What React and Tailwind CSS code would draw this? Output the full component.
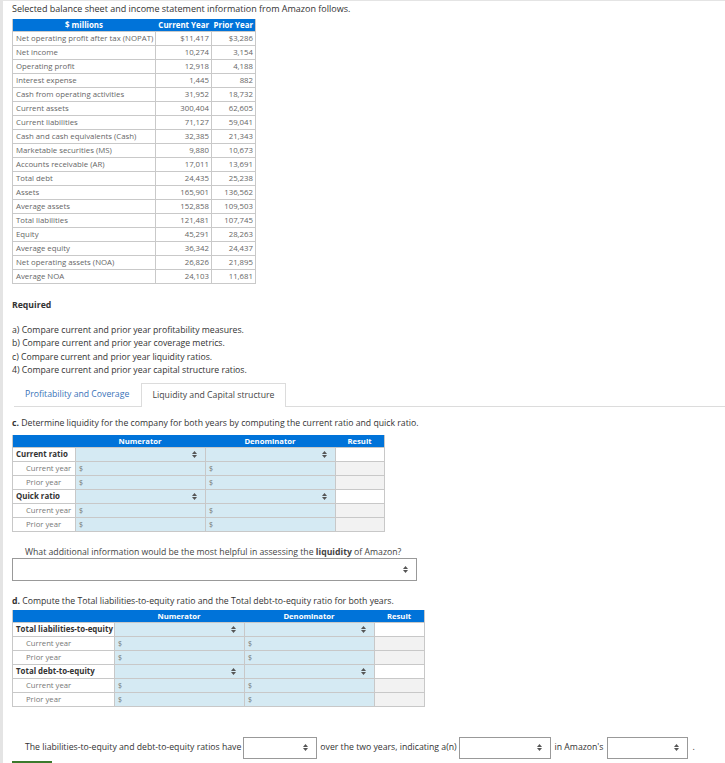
const TOP_ROWS = [
  ['Net operating profit after tax (NOPAT)', '$11,417', '$3,286'],
  ['Net income', '10,274', '3,154'],
  ['Operating profit', '12,918', '4,188'],
  ['Interest expense', '1,445', '882'],
  ['Cash from operating activities', '31,952', '18,732'],
  ['Current assets', '300,404', '62,605'],
  ['Current liabilities', '71,127', '59,041'],
  ['Cash and cash equivalents (Cash)', '32,385', '21,343'],
  ['Marketable securities (MS)', '9,880', '10,673'],
  ['Accounts receivable (AR)', '17,011', '13,691'],
  ['Total debt', '24,435', '25,238'],
  ['Assets', '165,901', '136,562'],
  ['Average assets', '152,858', '109,503'],
  ['Total liabilities', '121,481', '107,745'],
  ['Equity', '45,291', '28,263'],
  ['Average equity', '36,342', '24,437'],
  ['Net operating assets (NOA)', '26,826', '21,895'],
  ['Average NOA', '24,103', '11,681'],
];

const font = { fontFamily: '"Open Sans", "Noto Sans", sans-serif' };

function Arrows() {
  return (
    <svg width="5" height="7" viewBox="0 0 5 7" className="shrink-0">
      <path d="M2.5 0 L5 3 L0 3 Z" fill="#555" />
      <path d="M0 4 L5 4 L2.5 7 Z" fill="#555" />
    </svg>
  );
}

function RatioTable({ labelW, groups }) {
  const cols = `${labelW}px 130px 130px 1fr`;
  return (
    <div className="border border-[#c8c8c8] border-t-0">
      <div className="grid h-[12px] bg-[#0073d9] text-white font-bold text-[7.7px] leading-[12px]" style={{ gridTemplateColumns: cols }}>
        <div />
        <div className="text-center">Numerator</div>
        <div className="text-center">Denominator</div>
        <div className="text-center">Result</div>
      </div>
      {groups.map(g => (
        <div key={g}>
          <div className="grid h-[14px] border-t border-[#c8c8c8]" style={{ gridTemplateColumns: cols }}>
            <div className="pl-[3px] font-bold text-[#333] text-[7.9px] leading-[13px] whitespace-nowrap">{g}</div>
            <div className="bg-[#d5eaf3] border-l border-[#c8c8c8] flex items-center justify-end pr-[8px]"><Arrows /></div>
            <div className="bg-[#d5eaf3] border-l border-[#c8c8c8] flex items-center justify-end pr-[8px]"><Arrows /></div>
            <div className="bg-white border-l border-[#c8c8c8]" />
          </div>
          {['Current year', 'Prior year'].map(r => (
            <div key={r} className="grid h-[14px] border-t border-[#c8c8c8]" style={{ gridTemplateColumns: cols }}>
              <div className="pl-[13px] text-[#777] text-[7.7px] leading-[13px] whitespace-nowrap">{r}</div>
              <div className="bg-[#d5eaf3] border-l border-[#c8c8c8] pl-[3px] text-[7px] text-[#777] leading-[13px]">$</div>
              <div className="bg-[#d5eaf3] border-l border-[#c8c8c8] pl-[3px] text-[7px] text-[#777] leading-[13px]">$</div>
              <div className="bg-[#f2f2f2] border-l border-[#c8c8c8]" />
            </div>
          ))}
        </div>
      ))}
    </div>
  );
}

function Select({ w }) {
  return (
    <div className={`flex shrink-0 items-center justify-end h-[22px] border border-[#999] bg-white pr-[8px] ${w}`}>
      <Arrows />
    </div>
  );
}

export default function App() {
  return (
    <div className="min-h-[763px] bg-white border-l-[3px] border-t border-[#e4e4e4] text-[#333]" style={font}>
      <div className="pl-[9px]">
        {/* Intro */}
        <p className="text-[9px] leading-[15px] text-[#333] whitespace-nowrap">Selected balance sheet and income statement information from Amazon follows.</p>

        {/* Data table */}
        <div className="mt-[3px] w-[244px] border border-[#c9c9c9] border-t-0">
          <div className="grid grid-cols-[142px_56px_1fr] h-[12px] bg-[#0073d9] text-white font-bold text-[7.9px] leading-[12px] whitespace-nowrap">
            <div className="text-center">$ millions</div>
            <div className="text-right pr-[2px]">Current Year</div>
            <div className="text-right pr-[2px]">Prior Year</div>
          </div>
          {TOP_ROWS.map(([label, cur, prior]) => (
            <div key={label} className="grid grid-cols-[142px_56px_1fr] h-[14px] border-t border-[#c9c9c9] text-[7.8px] leading-[13px] text-[#666]">
              <div className="pl-[3px] whitespace-nowrap">{label}</div>
              <div className="border-l border-[#c9c9c9] text-right pr-[2px]">{cur}</div>
              <div className="border-l border-[#c9c9c9] text-right pr-[2px]">{prior}</div>
            </div>
          ))}
        </div>

        {/* Required */}
        <p className="mt-[15px] font-bold text-[8.7px] leading-[12px] text-[#333]">Required</p>
        <div className="mt-[13px] text-[8.7px] leading-[13.4px] text-[#333]">
          <p>a) Compare current and prior year profitability measures.</p>
          <p>b) Compare current and prior year coverage metrics.</p>
          <p>c) Compare current and prior year liquidity ratios.</p>
          <p>4) Compare current and prior year capital structure ratios.</p>
        </div>

        {/* Tabs */}
        <div className="mt-[5px] ml-[2px] flex items-end h-[24px] border-b border-[#dcdcdc] text-[8.7px]">
          <div className="w-[127px] h-[23px] flex items-center pl-[11px] text-[#3a72b8] whitespace-nowrap">Profitability and Coverage</div>
          <div className="w-[145px] h-[24px] -mb-px flex items-center justify-center border border-b-0 border-[#dcdcdc] bg-white text-[#444] whitespace-nowrap">Liquidity and Capital structure</div>
        </div>

        {/* Part c */}
        <p className="mt-[10px] text-[8.7px] leading-[12px] whitespace-nowrap"><span className="font-bold">c.</span> Determine liquidity for the company for both years by computing the current ratio and quick ratio.</p>
        <div className="mt-[6px] w-[373px]">
          <RatioTable labelW={62} groups={['Current ratio', 'Quick ratio']} />
        </div>

        <p className="mt-[14px] pl-[13px] text-[8.7px] leading-[12px] text-[#444] whitespace-nowrap">
          What additional information would be the most helpful in assessing the <span className="font-bold">liquidity</span> of Amazon?
        </p>
        <div className="mt-0">
          <Select w="w-[405px] h-[23px]" />
        </div>

        {/* Part d */}
        <p className="mt-[14px] text-[8.7px] leading-[12px] whitespace-nowrap"><span className="font-bold">d.</span> Compute the Total liabilities-to-equity ratio and the Total debt-to-equity ratio for both years.</p>
        <div className="mt-[3px] w-[413px]">
          <RatioTable labelW={101} groups={['Total liabilities-to-equity', 'Total debt-to-equity']} />
        </div>

        {/* Sentence */}
        <div className="mt-[30px] pl-[13px] flex items-center gap-[2px] text-[8.7px] text-[#333] whitespace-nowrap">
          <span>The liabilities-to-equity and debt-to-equity ratios have</span>
          <Select w="w-[74px]" />
          <span className="ml-[1px]">over the two years, indicating a(n)</span>
          <Select w="w-[92px]" />
          <span className="ml-[2px] mr-[2px]">in Amazon's</span>
          <Select w="w-[81px]" />
          <span className="ml-[2px]">.</span>
        </div>

        <div className="mt-[2px] w-[40px] h-[3px] bg-[#3b7a2c]" />
      </div>
    </div>
  );
}
